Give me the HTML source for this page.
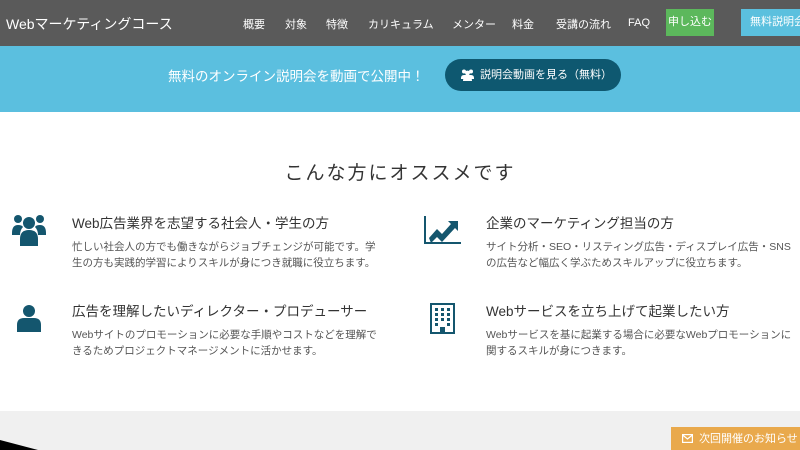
<!DOCTYPE html>
<html><head><meta charset="utf-8"><style>
*{margin:0;padding:0;box-sizing:border-box}
html,body{width:800px;height:450px;overflow:hidden}
body{position:relative;background:#fff;font-family:"Liberation Sans","Noto Sans CJK JP",sans-serif;color:#333}
.hd{position:absolute;left:0;top:0;width:800px;height:46px;background:#5a5a5a;color:#fff}
.logo{position:absolute;left:6px;top:14px;font-size:14px}
.nav span{position:absolute;top:16px;font-size:11px;color:#fff}
.btn{position:absolute;top:9px;height:27px;font-size:11px;color:#fff;line-height:27px;text-align:center}
.band{position:absolute;left:0;top:46px;width:800px;height:66px;background:#5bbfdf}
.band .t{position:absolute;left:168px;top:19px;font-size:13.5px;color:#fff}
.band .b{position:absolute;left:445px;top:13px;width:176px;height:32px;border-radius:16px;background:#0e5870;color:#fff;font-size:11px;line-height:32px;padding-left:35px}
h2{position:absolute;left:0;width:800px;top:158px;text-align:center;font-weight:normal;font-size:19px;letter-spacing:2px;color:#333}
.it{position:absolute}
.it h3{font-weight:normal;font-size:13.5px;color:#333;white-space:nowrap}
.it p{font-size:10.5px;line-height:15.5px;color:#555;margin-top:8px;width:305px}
.ic{position:absolute}
.foot{position:absolute;left:0;top:411px;width:800px;height:39px;background:#f0f0f0}
.news{position:absolute;left:671px;top:427px;width:129px;height:23px;background:#e9a94c;color:#fff;font-size:11px;line-height:25px;padding-left:28px;white-space:nowrap}
</style></head><body>
<div class="hd">
<div class="logo">Webマーケティングコース</div>
<div class="nav">
<span style="left:243px">概要</span><span style="left:285px">対象</span><span style="left:326px">特徴</span><span style="left:368px">カリキュラム</span><span style="left:452px">メンター</span><span style="left:512px">料金</span><span style="left:556px">受講の流れ</span><span style="left:628px;top:17px">FAQ</span>
</div>
<div class="btn" style="left:666px;width:48px;background:#5cb85c">申し込む</div>
<div class="btn" style="left:741px;width:70px;background:#5bc0de;text-align:left;padding-left:9px">無料説明会</div>
</div>
<div class="band">
<div class="t">無料のオンライン説明会を動画で公開中！</div>
<div class="b"><svg style="position:absolute;left:16px;top:10px" width="13" height="12" viewBox="0 0 13 12" fill="#fff"><circle cx="3" cy="2.5" r="2"/><circle cx="10" cy="2.5" r="2"/><circle cx="6.5" cy="4" r="2.4"/><path d="M0 9q0-3 3-3h7q3 0 3 3v1h-13z"/><path d="M2 12q0-4 4.5-4t4.5 4z"/></svg>説明会動画を見る（無料）</div>
</div>
<h2>こんな方にオススメです</h2>

<svg class="ic" style="left:12px;top:213px" width="34" height="33" viewBox="0 0 34 33" fill="#14566e"><circle cx="6" cy="6" r="4"/><circle cx="28" cy="6" r="4"/><circle cx="17" cy="10" r="6"/><path d="M0 20q0-8 6-8 4 0 5 2-3 3-3 8H0z"/><path d="M34 20q0-8-6-8-4 0-5 2 3 3 3 8h8z"/><path d="M8 33v-7q0-9 9-9t9 9v7z"/></svg>
<div class="it" style="left:72px;top:212px"><h3>Web広告業界を志望する社会人・学生の方</h3><p>忙しい社会人の方でも働きながらジョブチェンジが可能です。学生の方も実践的学習によりスキルが身につき就職に役立ちます。</p></div>

<svg class="ic" style="left:424px;top:216px" width="38" height="28" viewBox="0 0 38 28" fill="#14566e"><rect x="0" y="0" width="2" height="28"/><rect x="0" y="26" width="37" height="2"/><path d="M5 22l8-9 5 5 9-10-3-3h10v10l-3-3-13 14-5-5-6 6z"/></svg>
<div class="it" style="left:486px;top:212px"><h3>企業のマーケティング担当の方</h3><p>サイト分析・SEO・リスティング広告・ディスプレイ広告・SNSの広告など幅広く学ぶためスキルアップに役立ちます。</p></div>

<svg class="ic" style="left:17px;top:305px" width="24" height="27" viewBox="0 0 24 27" fill="#14566e"><circle cx="12" cy="6" r="6"/><path d="M0 27v-7q0-7 7-7h10q7 0 7 7v7z"/></svg>
<div class="it" style="left:72px;top:300px"><h3>広告を理解したいディレクター・プロデューサー</h3><p>Webサイトのプロモーションに必要な手順やコストなどを理解できるためプロジェクトマネージメントに活かせます。</p></div>

<svg class="ic" style="left:430px;top:303px" width="25" height="31" viewBox="0 0 25 31"><rect x="1" y="1" width="23" height="29" fill="#fff" stroke="#14566e" stroke-width="2"/><g fill="#14566e"><rect x="5" y="5" width="3" height="3"/><rect x="11" y="5" width="3" height="3"/><rect x="17" y="5" width="3" height="3"/><rect x="5" y="10" width="3" height="3"/><rect x="11" y="10" width="3" height="3"/><rect x="17" y="10" width="3" height="3"/><rect x="5" y="15" width="3" height="3"/><rect x="11" y="15" width="3" height="3"/><rect x="17" y="15" width="3" height="3"/><rect x="5" y="20" width="3" height="3"/><rect x="17" y="20" width="3" height="3"/><rect x="10" y="24" width="5" height="6"/></g></svg>
<div class="it" style="left:486px;top:300px"><h3>Webサービスを立ち上げて起業したい方</h3><p style="width:312px">Webサービスを基に起業する場合に必要なWebプロモーションに関するスキルが身につきます。</p></div>

<div class="foot"></div>
<svg style="position:absolute;left:0;top:438px" width="40" height="12"><path d="M0 2L38 12H0z" fill="#000"/></svg>
<div class="news"><svg style="position:absolute;left:11px;top:7px" width="11" height="9" viewBox="0 0 11 9" fill="none" stroke="#fff" stroke-width="1.2"><rect x=".6" y=".6" width="9.8" height="7.8"/><path d="M.6 1l4.9 4 4.9-4"/></svg>次回開催のお知らせ</div>
</body></html>
